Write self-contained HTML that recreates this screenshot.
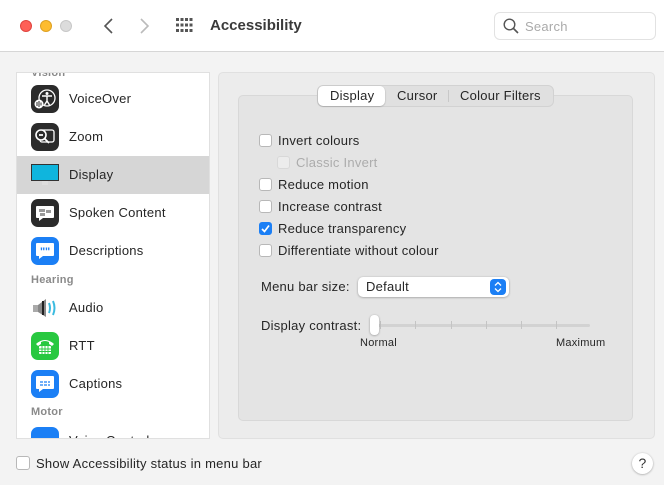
<!DOCTYPE html>
<html><head><meta charset="utf-8"><style>
*{box-sizing:border-box;margin:0;padding:0}
body{width:664px;height:485px;overflow:hidden;background:#f3f3f3;font-family:"Liberation Sans",sans-serif;font-size:13px;color:#262626;position:relative;letter-spacing:0.25px}
.abs{position:absolute}
.tb{left:0;top:0;width:664px;height:52px;background:#fff;border-bottom:1px solid #d6d6d6}
.dot{width:12px;height:12px;border-radius:50%;top:20px}
.side{left:16px;top:72px;width:194px;height:367px;background:#fff;border:1px solid #e0e0e0;overflow:hidden}
.row{position:absolute;left:0;width:192px;height:38px}
.row .ic{position:absolute;left:14px;top:5px;width:28px;height:28px;border-radius:7px}
.row .t{position:absolute;left:52px;top:11px;font-size:13px;color:#262626}
.hd{position:absolute;left:14px;font-size:11px;color:#8a8a8a;font-weight:bold}
.cb{width:13px;height:13px;border:1px solid #b8b8b8;border-radius:3px;background:#fff}
.lbl{font-size:13px;color:#262626}
</style></head><body>
<div class="abs tb"></div>
<div class="abs dot" style="left:20px;background:#fe5f57;border:1px solid #e0443e"></div>
<div class="abs dot" style="left:40px;background:#febc2e;border:1px solid #dea123"></div>
<div class="abs dot" style="left:60px;background:#dcdcdc;border:1px solid #c8c8c8"></div>
<svg class="abs" style="left:100px;top:16px" width="60" height="20"><path d="M12 3 L5 10 L12 17" stroke="#555" stroke-width="1.6" fill="none"/><path d="M41 3 L48 10 L41 17" stroke="#bbb" stroke-width="1.6" fill="none"/></svg>
<svg class="abs" style="left:176px;top:18px" width="20" height="16"><g fill="#555"><rect x="0" y="0" width="3" height="3"/><rect x="4.5" y="0" width="3" height="3"/><rect x="9" y="0" width="3" height="3"/><rect x="13.5" y="0" width="3" height="3"/><rect x="0" y="5.5" width="3" height="3"/><rect x="4.5" y="5.5" width="3" height="3"/><rect x="9" y="5.5" width="3" height="3"/><rect x="13.5" y="5.5" width="3" height="3"/><rect x="0" y="11" width="3" height="3"/><rect x="4.5" y="11" width="3" height="3"/><rect x="9" y="11" width="3" height="3"/><rect x="13.5" y="11" width="3" height="3"/></g></svg>
<div class="abs" style="left:210px;top:17px;font-size:15px;font-weight:bold;color:#3a3a3a;letter-spacing:0">Accessibility</div>
<div class="abs" style="left:494px;top:12px;width:162px;height:28px;border:1px solid #e2e2e2;border-radius:6px;background:#fff"></div>
<svg class="abs" style="left:503px;top:18px" width="16" height="16"><circle cx="6.5" cy="6.5" r="5.3" stroke="#555" stroke-width="1.4" fill="none"/><path d="M10.5 10.5 L15 15" stroke="#555" stroke-width="1.6"/></svg>
<div class="abs" style="left:525px;top:19px;font-size:13px;color:#aaa">Search</div>

<div class="abs side">
 <div class="hd" style="top:-6px">Vision</div>
 <div class="row" style="top:7px"><div class="ic" style="background:#2b2b2b"><svg width="28" height="28"><circle cx="16" cy="13" r="8" stroke="#fff" stroke-width="1.3" fill="none"/><circle cx="16" cy="8.5" r="1.5" fill="#fff"/><path d="M11 11 H21 M16 11 V16 L13.5 20 M16 16 L18.5 20" stroke="#fff" stroke-width="1.4" fill="none"/><circle cx="8" cy="19" r="4.5" fill="#fff"/><path d="M6 17v4M8 16v6M10 17.5v3" stroke="#2b2b2b" stroke-width="1"/></svg></div><div class="t">VoiceOver</div></div>
 <div class="row" style="top:45px"><div class="ic" style="background:#2b2b2b"><svg width="28" height="28"><rect x="9" y="7" width="14" height="12" rx="2" stroke="#fff" stroke-width="1.3" fill="none"/><circle cx="10" cy="12" r="5" fill="#2b2b2b" stroke="#fff" stroke-width="1.6"/><path d="M8 12h4M13.5 15.5 L18 20" stroke="#fff" stroke-width="1.8"/></svg></div><div class="t">Zoom</div></div>
 <div class="row" style="top:83px;background:#d6d6d6"><svg class="ic" width="28" height="28" style="border-radius:0"><rect x="0.5" y="3.5" width="27" height="16" fill="#0fb5dd" stroke="#333"/><rect x="11" y="20" width="6" height="4" fill="#ddd"/></svg><div class="t">Display</div></div>
 <div class="row" style="top:121px"><div class="ic" style="background:#2b2b2b"><svg width="28" height="28"><path d="M6 7h16a1 1 0 0 1 1 1v10a1 1 0 0 1-1 1H12l-4 3v-3H6a1 1 0 0 1-1-1V8a1 1 0 0 1 1-1z" fill="#fff"/><rect x="8" y="10" width="6" height="3" fill="#999"/><rect x="15" y="11" width="5" height="3" fill="#999"/><rect x="9" y="14" width="5" height="3" fill="#999"/></svg></div><div class="t">Spoken Content</div></div>
 <div class="row" style="top:159px"><div class="ic" style="background:#1b7ff5"><svg width="28" height="28"><path d="M6 6h16a1 1 0 0 1 1 1v11a1 1 0 0 1-1 1H12l-4 3v-3H6a1 1 0 0 1-1-1V7a1 1 0 0 1 1-1z" fill="#fff"/><text x="9" y="18" font-size="11" font-weight="bold" fill="#1b7ff5" font-family="Liberation Sans">"</text><text x="14" y="18" font-size="11" font-weight="bold" fill="#1b7ff5" font-family="Liberation Sans">"</text></svg></div><div class="t">Descriptions</div></div>
 <div class="hd" style="top:201px">Hearing</div>
 <div class="row" style="top:216px"><svg class="ic" width="28" height="28"><rect x="2" y="11" width="5" height="7" fill="#aaa"/><path d="M7 11 L15 5 V23 L7 18z" fill="#888"/><path d="M12 7 V21" stroke="#222" stroke-width="2"/><path d="M18 9 Q20 14 18 19" stroke="#3bbbe0" stroke-width="2" fill="none"/><path d="M22 7 Q25 14 22 21" stroke="#3bbbe0" stroke-width="2" fill="none"/></svg><div class="t">Audio</div></div>
 <div class="row" style="top:254px"><div class="ic" style="background:#28c840"><svg width="28" height="28"><path d="M5 12 Q14 4 23 12 L21 14 L18 12 L18 10 Q14 8 10 10 L10 12 L7 14z" fill="#fff"/><rect x="8" y="14" width="12" height="8" rx="1" fill="#fff"/><path d="M8 17h12M8 19.5h12M11 14v8M14 14v8M17 14v8" stroke="#28c840" stroke-width="0.9"/></svg></div><div class="t">RTT</div></div>
 <div class="row" style="top:292px"><div class="ic" style="background:#1b7ff5"><svg width="28" height="28"><path d="M6 6h16a1 1 0 0 1 1 1v11a1 1 0 0 1-1 1H12l-4 3v-3H6a1 1 0 0 1-1-1V7a1 1 0 0 1 1-1z" fill="#fff"/><path d="M9 12h10M9 15h10" stroke="#1b7ff5" stroke-width="1.3" stroke-dasharray="3 1"/></svg></div><div class="t">Captions</div></div>
 <div class="hd" style="top:333px">Motor</div>
 <div class="row" style="top:349px"><div class="ic" style="background:#1b7ff5"></div><div class="t">Voice Control</div></div>
</div>

<div class="abs" style="left:218px;top:72px;width:437px;height:367px;background:#ececec;border:1px solid #e0e0e0;border-radius:5px"></div>
<div class="abs" style="left:238px;top:95px;width:395px;height:326px;background:#e4e4e4;border:1px solid #d8d8d8;border-radius:5px"></div>
<div class="abs" style="left:317px;top:85px;width:237px;height:22px;background:#e0e0e0;border:1px solid #d2d2d2;border-radius:6px"></div>
<div class="abs" style="left:318px;top:86px;width:67px;height:20px;background:#fff;border-radius:5px;box-shadow:0 0.5px 1.5px rgba(0,0,0,.3)"></div>
<div class="abs lbl" style="left:330px;top:88px">Display</div>
<div class="abs lbl" style="left:397px;top:88px">Cursor</div>
<div class="abs" style="left:448px;top:90px;width:1px;height:12px;background:#c8c8c8"></div>
<div class="abs lbl" style="left:460px;top:88px">Colour Filters</div>

<div class="abs cb" style="left:259px;top:134px"></div><div class="abs lbl" style="left:278px;top:133px">Invert colours</div>
<div class="abs cb" style="left:277px;top:156px;border-color:#d8d8d8;background:#ececec"></div><div class="abs lbl" style="left:296px;top:155px;color:#acacac">Classic Invert</div>
<div class="abs cb" style="left:259px;top:178px"></div><div class="abs lbl" style="left:278px;top:177px">Reduce motion</div>
<div class="abs cb" style="left:259px;top:200px"></div><div class="abs lbl" style="left:278px;top:199px">Increase contrast</div>
<div class="abs cb" style="left:259px;top:222px;background:#1b7ff5;border-color:#1b7ff5"><svg width="11" height="11" style="position:absolute;left:0;top:0"><path d="M2 6 L4.5 8.5 L9 2.5" stroke="#fff" stroke-width="1.7" fill="none"/></svg></div><div class="abs lbl" style="left:278px;top:221px">Reduce transparency</div>
<div class="abs cb" style="left:259px;top:244px"></div><div class="abs lbl" style="left:278px;top:243px">Differentiate without colour</div>

<div class="abs lbl" style="left:261px;top:279px">Menu bar size:</div>
<div class="abs" style="left:358px;top:277px;width:151px;height:20px;background:#fff;border-radius:5px;box-shadow:0 0.5px 2px rgba(0,0,0,.35)"></div>
<div class="abs lbl" style="left:366px;top:279px">Default</div>
<div class="abs" style="left:490px;top:279px;width:16px;height:16px;background:#1b7ff5;border-radius:4px"><svg width="16" height="16"><path d="M5 6.5 L8 3.5 L11 6.5 M5 9.5 L8 12.5 L11 9.5" stroke="#fff" stroke-width="1.3" fill="none"/></svg></div>

<div class="abs lbl" style="left:261px;top:318px">Display contrast:</div>
<div class="abs" style="left:373px;top:324px;width:217px;height:3px;background:#d2d2d2;border-radius:2px"></div>
<svg class="abs" style="left:370px;top:319px" width="225" height="14"><g stroke="#c4c4c4" stroke-width="1"><path d="M10.5 2v8M45.5 2v8M81.5 2v8M116.5 2v8M151.5 2v8M186.5 2v8"/></g></svg>
<div class="abs" style="left:370px;top:315px;width:9px;height:20px;background:#fff;border-radius:4px;box-shadow:0 0.5px 2px rgba(0,0,0,.35)"></div>
<div class="abs" style="left:360px;top:337px;font-size:11px">Normal</div>
<div class="abs" style="left:556px;top:337px;font-size:11px">Maximum</div>

<div class="abs cb" style="left:16px;top:456px;width:14px;height:14px"></div>
<div class="abs lbl" style="left:36px;top:456px">Show Accessibility status in menu bar</div>
<div class="abs" style="left:632px;top:453px;width:21px;height:21px;border-radius:50%;background:#fff;box-shadow:0 0.5px 2px rgba(0,0,0,.35);text-align:center;font-size:14px;line-height:21px;color:#333">?</div>
</body></html>
